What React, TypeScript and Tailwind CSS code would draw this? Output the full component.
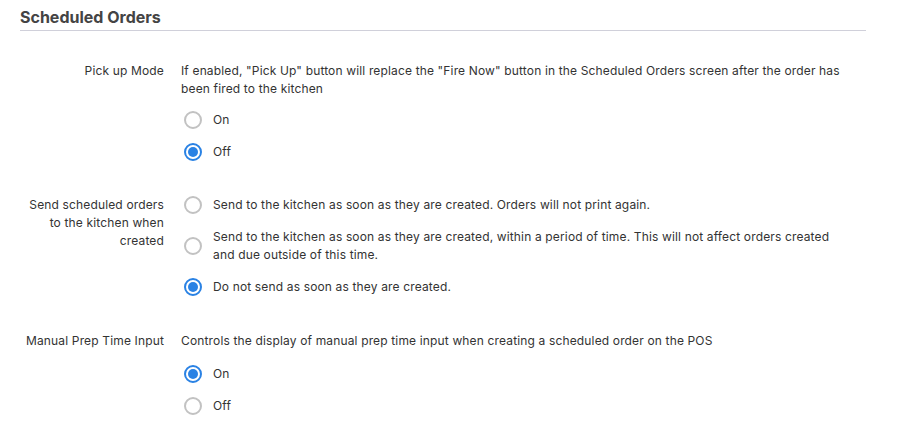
import React from "react";

type Option = { label: string; checked: boolean };

function Radio({ checked }: { checked: boolean }) {
  return checked ? (
    <span className="flex h-[18px] w-[18px] shrink-0 items-center justify-center rounded-full border-2 border-[#2a82e4]">
      <span className="h-[10px] w-[10px] rounded-full bg-[#2a82e4]" />
    </span>
  ) : (
    <span className="h-[18px] w-[18px] shrink-0 rounded-full border-2 border-[#c2c2c2]" />
  );
}

function OptionList({ options }: { options: Option[] }) {
  return (
    <div className="flex flex-col gap-[14px]">
      {options.map((o) => (
        <label key={o.label} className="flex items-center gap-[11px]">
          <Radio checked={o.checked} />
          <span>{o.label}</span>
        </label>
      ))}
    </div>
  );
}

function SettingRow({
  label,
  description,
  options,
  className,
  descClass,
}: {
  label: React.ReactNode;
  description?: string;
  options: Option[];
  className?: string;
  descClass?: string;
}) {
  return (
    <div className={`flex ${className ?? ""}`}>
      <div className="w-[164px] shrink-0 pl-[20px] text-right">{label}</div>
      <div className="ml-[17px] w-[665px]">
        {description && <p className={descClass ?? "mb-[13px]"}>{description}</p>}
        <div className="pl-[3px]">
          <OptionList options={options} />
        </div>
      </div>
    </div>
  );
}

export default function App() {
  return (
    <div
      className="min-h-[434px] bg-white text-[12px] leading-[18px] tracking-[0.15px] text-[#333]"
      style={{ fontFamily: "Inter, 'Noto Sans', sans-serif" }}
    >
      <div className="w-[866px] pl-[20px] pt-[7px]">
        <h2 className="pb-[3px] text-[16px] font-bold leading-[20px] tracking-normal text-[#444]">Scheduled Orders</h2>
        <div className="h-px bg-[#d0d0da]" />
      </div>
      <SettingRow
        className="mt-[31px]"
        label="Pick up Mode"
        description={'If enabled, "Pick Up" button will replace the "Fire Now" button in the Scheduled Orders screen after the order has been fired to the kitchen'}
        options={[
          { label: "On", checked: false },
          { label: "Off", checked: true },
        ]}
      />
      <SettingRow
        className="mt-[35px]"
        label={
          <>
            Send scheduled orders
            <br />
            to the kitchen when
            <br />
            created
          </>
        }
        options={[
          { label: "Send to the kitchen as soon as they are created. Orders will not print again.", checked: false },
          {
            label:
              "Send to the kitchen as soon as they are created, within a period of time. This will not affect orders created and due outside of this time.",
            checked: false,
          },
          { label: "Do not send as soon as they are created.", checked: true },
        ]}
      />
      <SettingRow
        className="mt-[36px]"
        descClass="mb-[15px]"
        label="Manual Prep Time Input"
        description="Controls the display of manual prep time input when creating a scheduled order on the POS"
        options={[
          { label: "On", checked: true },
          { label: "Off", checked: false },
        ]}
      />
    </div>
  );
}
